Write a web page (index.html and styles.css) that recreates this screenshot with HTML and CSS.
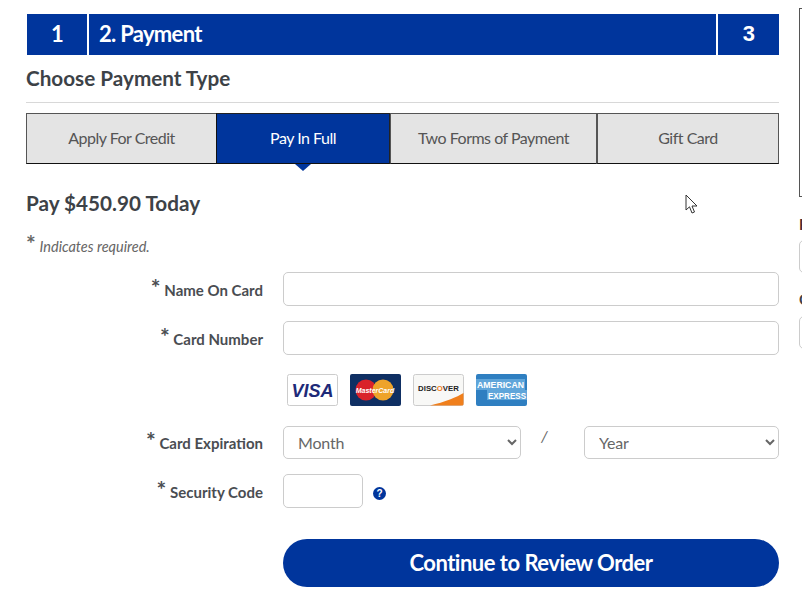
FILE: index.html
```html
<!DOCTYPE html>
<html lang="en">
<head>
    <meta charset="UTF-8">
    <meta name="viewport" content="width=device-width, initial-scale=1.0">
    <title>Checkout - Payment</title>
    <link rel="stylesheet" href="styles.css">
</head>
<body>
    <div class="page">
        <main class="checkout">
            <div class="steps">
                <div class="step step-num">1</div>
                <div class="step step-current">2. Payment</div>
                <div class="step step-num step-last">3</div>
            </div>

            <h2 class="section-title">Choose Payment Type</h2>

            <div class="tabs">
                <div class="tab tab-credit">Apply For Credit</div>
                <div class="tab tab-full active">Pay In Full</div>
                <div class="tab tab-two">Two Forms of Payment</div>
                <div class="tab tab-gift">Gift Card</div>
            </div>

            <h3 class="pay-title">Pay $450.90 Today</h3>
            <p class="required-note"><span class="star">*</span> <em>Indicates required.</em></p>

            <form class="pay-form">
                <label class="field-label row-name" for="cardName"><span class="star">*</span> Name On Card</label>
                <input class="text-input row-name" type="text" id="cardName">

                <label class="field-label row-number" for="cardNumber"><span class="star">*</span> Card Number</label>
                <input class="text-input row-number" type="text" id="cardNumber">

                <div class="cards">
                    <svg class="card" width="51" height="32" viewBox="0 0 51 32">
                        <rect x="0.5" y="0.5" width="50" height="31" rx="2" fill="#fff" stroke="#ccc"/>
                        <text x="25.500" y="22.500" text-anchor="middle" class="visa-text">VISA</text>
                    </svg>
                    <svg class="card" width="51" height="32" viewBox="0 0 51 32">
                        <rect width="51" height="32" rx="2" fill="#0f2f63"/>
                        <circle cx="16" cy="16" r="10.500" fill="#d9222a"/>
                        <circle cx="33" cy="16" r="10.500" fill="#eea32a"/>
                        <text x="25" y="18.500" text-anchor="middle" class="mc-text">MasterCard</text>
                    </svg>
                    <svg class="card" width="51" height="32" viewBox="0 0 51 32">
                        <rect x="0.5" y="0.5" width="50" height="31" rx="2" fill="#f8f8f6" stroke="#ccc"/>
                        <path d="M17 31.500 C32 28 44 23 50.500 19 V30 Q50.500 31.500 49 31.500 Z" fill="#f07f1c"/>
                        <text x="25.500" y="17" text-anchor="middle" class="discover-text">DISC<tspan fill="#f07f1c">O</tspan>VER</text>
                    </svg>
                    <svg class="card" width="51" height="32" viewBox="0 0 51 32">
                        <rect width="51" height="32" rx="2" fill="#2f7fc1"/>
                        <rect y="5" width="49" height="11" fill="#5fa5da"/>
                        <rect x="11" y="16" width="40" height="10" fill="#5fa5da"/>
                        <text x="1" y="14" textLength="47" lengthAdjust="spacingAndGlyphs" class="amex-text">AMERICAN</text>
                        <text x="12" y="24.500" textLength="38" lengthAdjust="spacingAndGlyphs" class="amex-text">EXPRESS</text>
                    </svg>
                </div>

                <label class="field-label row-expiry" for="expMonth"><span class="star">*</span> Card Expiration</label>
                <div class="expiry row-expiry">
                    <select class="select-input" id="expMonth"><option>Month</option></select>
                    <span class="slash">/</span>
                    <select class="select-input" id="expYear"><option>Year</option></select>
                </div>

                <label class="field-label row-code" for="securityCode"><span class="star">*</span> Security Code</label>
                <div class="code-wrap row-code">
                    <input class="text-input code-input" type="text" id="securityCode">
                    <span class="help-icon">?</span>
                </div>

                <button class="continue-btn" type="button">Continue to Review Order</button>
            </form>
        </main>

        <aside class="sidebar">
            <div class="summary-box"></div>
            <div class="side-label side-label-first">Promo</div>
            <div class="side-input"></div>
            <div class="side-label side-label-second">Coupon</div>
            <div class="side-input"></div>
        </aside>
    </div>

    <svg class="cursor" width="14" height="21" viewBox="0 0 14 21">
        <path d="M1 1 V16 L4.500 12.800 L7 19 L9.500 18 L7 12 H12 Z" fill="#fff" stroke="#333" stroke-width="1"/>
    </svg>
</body>
</html>
```

FILE: styles.css
```css
* {
    box-sizing: border-box;
}
html, body {
    height: 100%;
}
body {
    margin: 0;
    overflow: hidden;
    font-family: Lato, "Liberation Sans", sans-serif;
    color: #3d4247;
    background: #fff;
}
.page {
    display: flex;
    padding-top: 8px;
    width: 1100px;
}
.checkout {
    width: 753px;
    margin-left: 26px;
    padding-top: 6px;
}
.steps {
    display: flex;
    gap: 2px;
    margin-left: 1px;
    height: 41px;
    color: #fff;
    font-weight: 700;
    font-size: 22px;
    letter-spacing: -0.7px;
}
.step {
    background: #00359c;
    display: flex;
    align-items: center;
    padding-bottom: 2px;
}
.step-num {
    width: 60px;
    justify-content: center;
}
.step-last {
    width: 61px;
    font-family: "Liberation Sans", sans-serif;
}
.step-current {
    flex: 1;
    padding-left: 10px;
}
.section-title {
    margin: 0;
    padding: 10px 0 10px;
    height: 48px;
    font-size: 20.700px;
    line-height: 27px;
    font-weight: 700;
    border-bottom: 1px solid #d8d8d8;
}
.tabs {
    display: flex;
    margin-top: 10px;
    height: 51px;
}
.tab {
    display: flex;
    align-items: center;
    justify-content: center;
    padding-bottom: 2px;
    font-size: 16px;
    letter-spacing: -0.5px;
    color: #555;
    background: #e4e4e4;
    border: 1px solid #555;
    border-bottom-color: #111;
    border-right-width: 0;
}
.tab-credit { width: 190px; }
.tab-full { width: 174px; }
.tab-two { width: 206px; }
.tab-gift {
    width: 183px;
    border-left-width: 2px;
    border-right-width: 1px;
}
.tab.active {
    position: relative;
    background: #00359c;
    color: #fff;
    border-left-width: 1px;
    border-color: #222 #222 #111 #111;
    border-right-width: 1px;
}
.tab.active::after {
    content: "";
    position: absolute;
    left: 78px;
    bottom: -8px;
    border-left: 8px solid transparent;
    border-right: 8px solid transparent;
    border-top: 7px solid #00359c;
}
.pay-title {
    margin: 0;
    padding-top: 26px;
    font-size: 20.700px;
    line-height: 27px;
    font-weight: 700;
}
.required-note {
    margin: 18px 0 0;
    font-size: 14.500px;
    line-height: 24px;
    color: #666;
}
.star {
    font-size: 23px;
    line-height: 14px;
    font-weight: 700;
}
.pay-form {
    display: grid;
    grid-template-columns: 237px 496px;
    column-gap: 20px;
    margin-top: 13px;
    align-items: center;
}
.field-label {
    text-align: right;
    font-size: 15px;
    font-weight: 700;
    color: #4a4d52;
    line-height: 20px;
    padding-top: 1px;
}
.text-input {
    height: 34px;
    width: 100%;
    border: 1px solid #ccc;
    border-radius: 5px;
    background: #fff;
}
.row-number {
    margin-top: 15px;
}
.cards {
    grid-column: 2;
    display: flex;
    gap: 12px;
    height: 32px;
    margin: 19px 0 20px 4px;
}
.card {
    display: block;
}
.visa-text {
    font: italic 700 18px "Liberation Sans", sans-serif;
    fill: #1d2a78;
}
.mc-text {
    font: italic 700 7px "Liberation Sans", sans-serif;
    fill: #fff;
}
.discover-text {
    font: 700 7.800px "Liberation Sans", sans-serif;
    fill: #222;
}
.amex-text {
    font: 700 8.500px "Liberation Sans", sans-serif;
    fill: #fff;
}
.expiry {
    display: flex;
    height: 33px;
}
.select-input {
    height: 33px;
    padding-left: 10px;
    border: 1px solid #ccc;
    border-radius: 5px;
    background: #fff;
    color: #666;
    font-family: Lato, sans-serif;
    font-size: 16px;
    letter-spacing: -0.2px;
}
#expMonth {
    width: 238px;
}
#expYear {
    width: 195px;
}
.slash {
    width: 63px;
    padding: 0 0 0 20px;
    color: #666;
    font-size: 16px;
    font-style: italic;
    line-height: 20px;
}
.row-code {
    margin-top: 15px;
}
.code-wrap {
    display: flex;
    align-items: center;
    gap: 10px;
}
.code-input {
    width: 80px;
}
.help-icon {
    width: 13px;
    height: 13px;
    margin-top: 4px;
    border-radius: 50%;
    background: #00359c;
    color: #fff;
    font: 700 10px/13px "Liberation Sans", sans-serif;
    text-align: center;
}
.continue-btn {
    grid-column: 2;
    height: 48px;
    margin-top: 31px;
    padding-bottom: 2px;
    border: none;
    border-radius: 24px;
    background: #00359c;
    color: #fff;
    font-family: Lato, sans-serif;
    font-size: 22px;
    font-weight: 700;
    letter-spacing: -0.5px;
}
.sidebar {
    width: 260px;
    margin-left: 20px;
}
.summary-box {
    height: 189px;
    border: 1px solid #555;
}
.side-label {
    font-size: 15px;
    font-weight: 700;
    line-height: 20px;
}
.side-label-first {
    margin-top: 17px;
    color: #4a2a30;
}
.side-label-second {
    margin-top: 16px;
}
.side-input {
    height: 33px;
    margin-top: 6px;
    border: 1px solid #ccc;
    border-radius: 5px;
}
.side-label-second + .side-input {
    margin-top: 7px;
}
.cursor {
    position: absolute;
    left: 685px;
    top: 194px;
}
```
